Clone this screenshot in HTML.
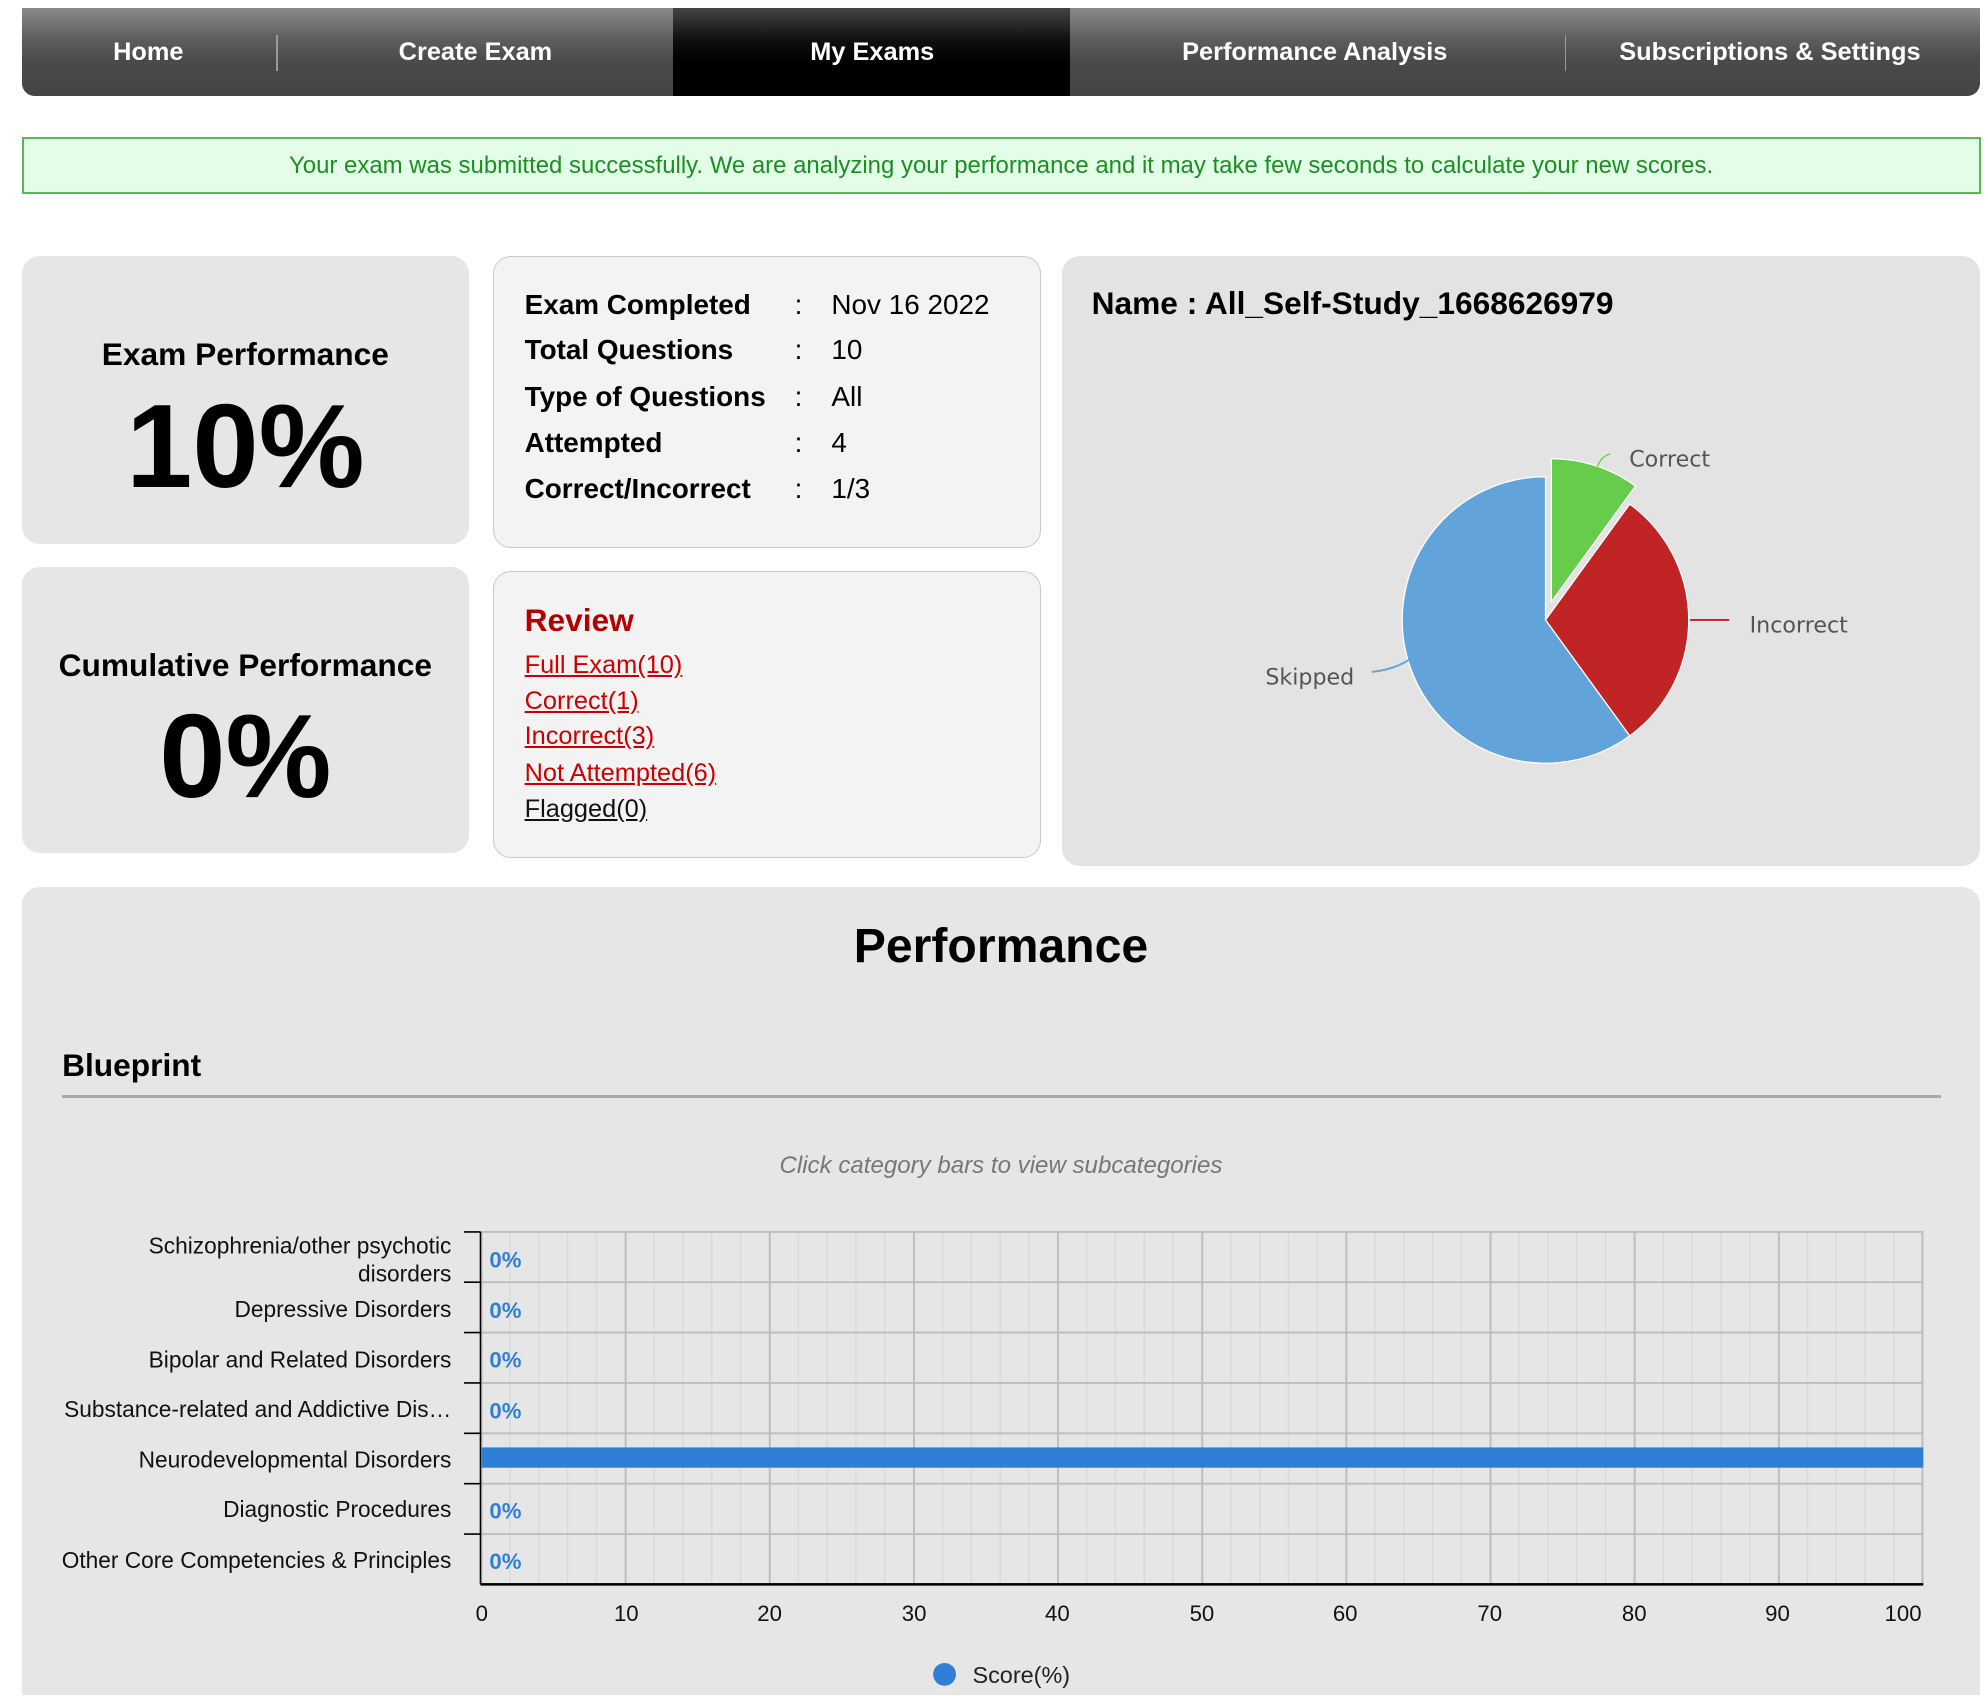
<!DOCTYPE html>
<html><head><meta charset="utf-8"><style>
html{zoom:1.267857;overflow:hidden}
body{margin:0;background:#fff;font-family:"Liberation Sans",Arial,sans-serif}
#w{width:1568px;height:1337px;position:relative;overflow:hidden}
.a{position:absolute}
.nav{left:17px;top:6px;width:1545px;height:70px;border-radius:0 0 10px 10px;background:linear-gradient(#8a8a8a 0%,#5e5e5e 35%,#4a4a4a 60%,#444 100%);overflow:hidden}
.nav .act{position:absolute;left:514px;top:0;width:313px;height:70px;background:linear-gradient(#444 0%,#111 35%,#000 60%,#000)}
.nav span{position:absolute;top:24px;color:#fff;font-weight:bold;font-size:20px;transform:translateX(-50%);white-space:nowrap}
.sep{position:absolute;top:22px;width:1px;height:28px;background:#999}
.alert{left:17px;top:108px;width:1542px;height:42px;border:2px solid #55b95a;background:#e3fde9;color:#1b8f22;font-size:18.9px;text-align:center;line-height:43px}
.c{background:#e6e6e6;border-radius:14px}
.w{background:#f3f3f3;border:1.5px solid #c9c9c9;border-radius:14px;box-sizing:border-box}
.t{font-weight:bold;font-size:25px;text-align:center;width:100%}
.big{font-weight:bold;text-align:center;width:100%;line-height:1}
.row{position:absolute;font-size:22px;left:24px}
.row b{position:absolute;left:0;white-space:nowrap}
.row i{position:absolute;left:213px;font-style:normal}
.row em{position:absolute;left:242px;font-style:normal;white-space:nowrap}
.lk{position:absolute;left:24px;font-size:20px;color:#c00;text-decoration:underline;white-space:nowrap}
</style></head><body><div id="w">
<div class="a nav"><div class="act"></div>
<span style="left:100px">Home</span><div class="sep" style="left:201px"></div>
<span style="left:358px">Create Exam</span>
<span style="left:671px">My Exams</span>
<span style="left:1020px">Performance Analysis</span><div class="sep" style="left:1217px"></div>
<span style="left:1379px">Subscriptions &amp; Settings</span></div>
<div class="a alert">Your exam was submitted successfully. We are analyzing your performance and it may take few seconds to calculate your new scores.</div>

<div class="a c" style="left:17px;top:202px;width:353px;height:227px">
<div class="a t" style="top:63px">Exam Performance</div>
<div class="a big" style="top:103px;font-size:94px">10%</div></div>
<div class="a c" style="left:17px;top:447px;width:353px;height:226px">
<div class="a t" style="top:63px">Cumulative Performance</div>
<div class="a big" style="top:103px;font-size:94px">0%</div></div>

<div class="a w" style="left:389px;top:202px;width:432px;height:230px">
<div class="row" style="top:25px"><b>Exam Completed</b><i>:</i><em>Nov 16 2022</em></div>
<div class="row" style="top:61px"><b>Total Questions</b><i>:</i><em>10</em></div>
<div class="row" style="top:98px"><b>Type of Questions</b><i>:</i><em>All</em></div>
<div class="row" style="top:134px"><b>Attempted</b><i>:</i><em>4</em></div>
<div class="row" style="top:170px"><b>Correct/Incorrect</b><i>:</i><em>1/3</em></div>
</div>
<div class="a w" style="left:389px;top:450px;width:432px;height:227px">
<div class="a" style="left:24px;top:24px;font-size:25px;font-weight:bold;color:#b30000">Review</div>
<div class="lk" style="top:63px">Full Exam(10)</div>
<div class="lk" style="top:91px">Correct(1)</div>
<div class="lk" style="top:119px">Incorrect(3)</div>
<div class="lk" style="top:148px">Not Attempted(6)</div>
<div class="lk" style="top:176px;color:#111">Flagged(0)</div>
</div>

<div class="a c" style="left:838px;top:202px;width:724px;height:481px;background:#e3e3e3">
<div class="a" style="left:23px;top:23px;font-size:25px;font-weight:bold">Name : All_Self-Study_1668626979</div></div>
<svg class="a" style="left:0;top:0" width="1568" height="700">
<path d="M1219 489 L1285.4 397.6 A113 113 0 0 1 1285.4 580.4 Z" fill="#c12424" stroke="#fff" stroke-width="1"/>
<path d="M1219 489 L1285.4 580.4 A113 113 0 1 1 1219 376 Z" fill="#62a4da" stroke="#fff" stroke-width="1"/>
<path d="M1223.6 474.7 L1223.6 361.7 A113 113 0 0 1 1290 383.3 Z" fill="#66cc4c" stroke="#fff" stroke-width="1"/>
<path d="M1260 368 Q1263 360 1270 358" stroke="#66cc4c" fill="none"/>
<path d="M1333 489 L1364 489" stroke="#c12424" stroke-width="1.5"/>
<path d="M1112 520 Q1100 528 1082 530" stroke="#62a4da" fill="none" stroke-width="1.5"/>
<g font-size="17.5" fill="#555" font-family="DejaVu Sans,sans-serif">
<text x="1285" y="368">Correct</text><text x="1380" y="499">Incorrect</text><text x="998" y="540">Skipped</text></g>
</svg>

<div class="a c" style="left:17px;top:700px;width:1545px;height:700px">
<div class="a" style="top:24px;width:100%;text-align:center;font-size:38px;font-weight:bold;left:0">Performance</div>
<div class="a" style="left:32px;top:126px;font-size:25px;font-weight:bold">Blueprint</div>
<div class="a" style="left:32px;top:164px;width:1482px;height:2px;background:#aaa"></div>
<div class="a" style="top:209px;left:0;width:100%;text-align:center;font-size:19px;font-style:italic;color:#777">Click category bars to view subcategories</div>
</div>
<svg class="a" style="left:0;top:950px" width="1568" height="400" viewBox="0 950 1568 400">
<defs>
<pattern id="mn" patternUnits="userSpaceOnUse" x="379" y="0" width="22.74" height="10"><rect x="0" y="0" width="1" height="10" fill="#d8d8d8"/></pattern>
<pattern id="mj" patternUnits="userSpaceOnUse" x="379" y="0" width="113.7" height="10"><rect x="0" y="0" width="1.5" height="10" fill="#bdbdbd"/></pattern>
</defs>
<rect x="380" y="972" width="1137" height="278" fill="url(#mn)"/>
<rect x="380" y="972" width="1137" height="278" fill="url(#mj)"/>
<rect x="1515.5" y="972" width="1.5" height="278" fill="#bdbdbd"/>
<g stroke="#bdbdbd" stroke-width="1.5">
<line x1="379" x2="1517" y1="972" y2="972"/><line x1="379" x2="1517" y1="1011.7" y2="1011.7"/><line x1="379" x2="1517" y1="1051.4" y2="1051.4"/><line x1="379" x2="1517" y1="1091.1" y2="1091.1"/><line x1="379" x2="1517" y1="1130.9" y2="1130.9"/><line x1="379" x2="1517" y1="1170.6" y2="1170.6"/><line x1="379" x2="1517" y1="1210.3" y2="1210.3"/></g>
<g stroke="#000" stroke-width="1.3">
<line x1="379" x2="379" y1="972" y2="1250"/>
<line x1="366" x2="379" y1="972" y2="972"/><line x1="366" x2="379" y1="1011.7" y2="1011.7"/><line x1="366" x2="379" y1="1051.4" y2="1051.4"/><line x1="366" x2="379" y1="1091.1" y2="1091.1"/><line x1="366" x2="379" y1="1130.9" y2="1130.9"/><line x1="366" x2="379" y1="1170.6" y2="1170.6"/><line x1="366" x2="379" y1="1210.3" y2="1210.3"/></g>
<rect x="379" y="1249" width="1138" height="2" fill="#000"/>
<rect x="380" y="1142" width="1137" height="16" fill="#2f7ed8"/>
<g font-size="17.5" font-weight="bold" fill="#2f7ed8"><text x="386" y="1000">0%</text><text x="386" y="1040">0%</text><text x="386" y="1079">0%</text><text x="386" y="1119">0%</text><text x="386" y="1198">0%</text><text x="386" y="1238">0%</text></g>
<g font-size="17.9" fill="#111" text-anchor="end">
<text x="356" y="989">Schizophrenia/other psychotic</text><text x="356" y="1011">disorders</text>
<text x="356" y="1039">Depressive Disorders</text><text x="356" y="1079">Bipolar and Related Disorders</text>
<text x="356" y="1118">Substance-related and Addictive Dis…</text><text x="356" y="1158">Neurodevelopmental Disorders</text>
<text x="356" y="1197">Diagnostic Procedures</text><text x="356" y="1237">Other Core Competencies &amp; Principles</text></g>
<g font-size="17.5" fill="#111" text-anchor="middle">
<text x="380" y="1279">0</text><text x="494" y="1279">10</text><text x="607" y="1279">20</text><text x="721" y="1279">30</text><text x="834" y="1279">40</text><text x="948" y="1279">50</text><text x="1061" y="1279">60</text><text x="1175" y="1279">70</text><text x="1289" y="1279">80</text><text x="1402" y="1279">90</text><text x="1501" y="1279">100</text></g>
<circle cx="745" cy="1321" r="9" fill="#2f7ed8"/>
<text x="767" y="1328" font-size="18.5" fill="#222">Score(%)</text>
</svg>
</div></body></html>
